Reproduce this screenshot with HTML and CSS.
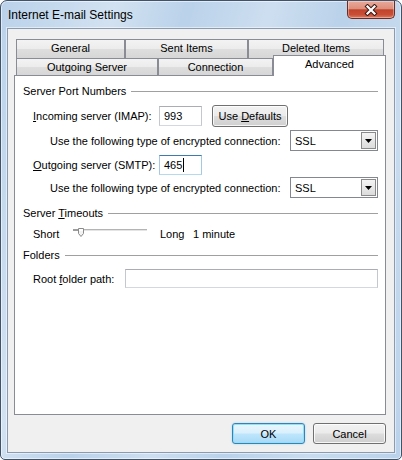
FILE: index.html
```html
<!DOCTYPE html>
<html>
<head>
<meta charset="utf-8">
<link rel="stylesheet" href="styles.css">
</head>
<body>
<div class="window">
  <div class="titlebar">
    <span class="title">Internet E-mail Settings</span>
    <div class="close">
      <svg width="14" height="12" viewBox="0 0 14 12"><path d="M3.5 2.5 L10.5 9.5 M10.5 2.5 L3.5 9.5" stroke="#3a1a15" stroke-width="4.2" stroke-linecap="square"/><path d="M3.5 2.5 L10.5 9.5 M10.5 2.5 L3.5 9.5" stroke="#fff" stroke-width="2.2" stroke-linecap="square"/></svg>
    </div>
  </div>
  <div class="client">
    <div class="tabs">
      <div class="tabrow back">
        <div class="tab t-general">General</div>
        <div class="tab t-sent">Sent Items</div>
        <div class="tab t-deleted">Deleted Items</div>
      </div>
      <div class="tabrow front">
        <div class="tab t-outgoing">Outgoing Server</div>
        <div class="tab t-connection">Connection</div>
        <div class="tab t-advanced selected">Advanced</div>
      </div>
    </div>
    <div class="panel">
      <div class="hdr"><span>Server Port Numbers</span><span class="line"></span></div>
      <div class="row r1">
        <span class="lbl-port"><u>I</u>ncoming server (IMAP):</span>
        <div class="input port">993</div>
        <div class="btn defaults"><span>Use <u>D</u>efaults</span></div>
      </div>
      <div class="row enc r2">
        <span>Use the following type of encrypted connection:</span>
        <div class="select"><span>SSL</span><span class="arrow"><svg width="7" height="4" viewBox="0 0 7 4"><polygon points="0,0 7,0 3.5,4" fill="#000"/></svg></span></div>
      </div>
      <div class="row r3">
        <span class="lbl-port"><u>O</u>utgoing server (SMTP):</span>
        <div class="input port focus">465<span class="caret"></span></div>
      </div>
      <div class="row enc r4">
        <span>Use the following type of encrypted connection:</span>
        <div class="select"><span>SSL</span><span class="arrow"><svg width="7" height="4" viewBox="0 0 7 4"><polygon points="0,0 7,0 3.5,4" fill="#000"/></svg></span></div>
      </div>
      <div class="hdr h2"><span>Server <u>T</u>imeouts</span><span class="line"></span></div>
      <div class="row r5">
        <span class="lbl-short">Short</span>
        <svg class="slider" width="74" height="13" viewBox="0 0 74 13">
          <rect x="0" y="2" width="74" height="1" fill="#b4b4b4"/>
          <rect x="0" y="3" width="74" height="1" fill="#e4e4e4"/>
          <rect x="0" y="2" width="5" height="2" fill="#9c9c9c"/>
          <path d="M5.5 1.5 H10.5 V6.5 L8 9.5 L5.5 6.5 Z" fill="#f2f2f2" stroke="#8a8a8a"/>
          <rect x="6" y="2" width="4" height="2" fill="#fff"/>
        </svg>
        <span class="lbl-long">Long</span>
        <span>1 minute</span>
      </div>
      <div class="hdr h3"><span>Folders</span><span class="line"></span></div>
      <div class="row r6">
        <span class="lbl-root">Root <u>f</u>older path:</span>
        <div class="input root"></div>
      </div>
    </div>
    <div class="buttons">
      <div class="btn dlg ok">OK</div>
      <div class="btn dlg">Cancel</div>
    </div>
  </div>
</div>
</body>
</html>
```
FILE: styles.css
```css
* { box-sizing: border-box; }
html, body { margin: 0; padding: 0; }
body {
  width: 402px;
  height: 460px;
  overflow: hidden;
  background: #fff;
  font-family: "Liberation Sans", Arial, sans-serif;
  font-size: 11px;
  color: #000;
}
.window {
  width: 402px;
  height: 460px;
  border: 1px solid #40536b;
  border-radius: 7px 7px 5px 5px;
  padding: 0 6px 6px 6px;
  display: flex;
  flex-direction: column;
  background:
    linear-gradient(105deg, rgba(255,255,255,0) 0%, rgba(255,255,255,.35) 22%, rgba(255,255,255,0) 36%, rgba(255,255,255,.28) 52%, rgba(255,255,255,0) 66%, rgba(255,255,255,.22) 82%, rgba(255,255,255,0) 100%),
    #bad2ea;
  box-shadow: inset 0 0 0 1px rgba(255,255,255,.55);
}
.titlebar {
  height: 27px;
  display: flex;
  align-items: flex-start;
}
.title {
  margin-top: 7px;
  padding-left: 1px;
  font-size: 12px;
  line-height: 15px;
}
.close {
  margin-left: auto;
  width: 48px;
  height: 18px;
  border: 1px solid #6a2c24;
  border-top: none;
  border-radius: 0 0 5px 5px;
  background: linear-gradient(#eaa99a 0%, #dc8f7c 45%, #c3432b 52%, #c84f36 80%, #dd7a5f 100%);
  box-shadow: inset 0 0 0 1px rgba(255,255,255,.35);
  display: flex;
  align-items: center;
  justify-content: center;
}
.client {
  height: 425px;
  background: #f0f0f0;
  border: 1px solid #8a9ab0;
  box-shadow: 0 0 0 1px rgba(255,255,255,.5);
  padding: 10px 8px 8px 6px;
  display: flex;
  flex-direction: column;
}
.tabs {
  margin-left: 2px;
  display: flex;
  flex-direction: column;
}
.tabrow {
  display: flex;
  align-items: flex-end;
}
.tabrow.back { height: 19px; }
.tabrow.front { height: 17px; }
.tab {
  border: 1px solid #898c95;
  border-bottom: none;
  background: linear-gradient(#f3f3f3 0%, #ececec 48%, #dedede 52%, #d6d6d6 100%);
  text-align: center;
}
.back .tab { height: 19px; line-height: 17px; }
.front .tab { height: 17px; line-height: 16px; }
.t-general { width: 109px; }
.t-sent { width: 123px; }
.t-deleted { width: 136px; }
.t-outgoing { width: 142px; }
.t-connection { width: 115px; }
.front .tab.selected {
  width: 113px;
  height: 21px;
  margin-bottom: -1px;
  background: #fff;
  position: relative;
  z-index: 2;
  line-height: 16px;
}
.panel {
  width: 372px;
  height: 340px;
  border: 1px solid #898c95;
  background: #fff;
  padding: 9px 7px 0 8px;
  display: flex;
  flex-direction: column;
}
.hdr {
  height: 13px;
  line-height: 13px;
  display: flex;
  align-items: center;
  gap: 5px;
}
.hdr .line {
  flex: 1;
  height: 1px;
  background: #a0a0a0;
}
.h2, .h3 { margin-top: 9px; }
.row {
  display: flex;
  align-items: center;
  padding-left: 10px;
}
.r1 { height: 22px; margin-top: 7px; }
.r2 { height: 21px; margin-top: 3px; }
.r3 { height: 20px; margin-top: 4px; }
.r4 { height: 21px; margin-top: 2px; }
.r5 { height: 13px; margin-top: 7px; }
.r6 { height: 19px; margin-top: 7px; }
.row.enc { padding-left: 27px; }
.lbl-port { width: 126px; }
.lbl-short { width: 40px; }
.lbl-long { width: 33px; margin-left: 13px; }
.lbl-root { width: 92px; }
.input {
  height: 20px;
  border: 1px solid #abadb3;
  border-left-color: #c4c7ce;
  border-right-color: #c4c7ce;
  border-bottom-color: #d3d7de;
  background: #fff;
  padding-left: 4px;
  line-height: 18px;
  display: flex;
  align-items: center;
}
.input.port { width: 43px; }
.input.focus {
  border-color: #3d7bad #a4c9e3 #b7d9ed #a4c9e3;
}
.input.root { flex: 1; height: 19px; }
.caret {
  display: inline-block;
  width: 1px;
  height: 14px;
  background: #000;
  margin-left: 1px;
}
.btn {
  height: 22px;
  border: 1px solid #707070;
  border-radius: 3px;
  background: linear-gradient(#f2f2f2 0%, #ebebeb 48%, #dddddd 52%, #cfcfcf 100%);
  box-shadow: inset 0 0 0 1px rgba(255,255,255,.8);
  display: flex;
  align-items: center;
  justify-content: center;
}
.btn.defaults { width: 76px; margin-left: 10px; }
.select {
  margin-left: auto;
  width: 88px;
  height: 21px;
  border: 1px solid #828790;
  background: #fff;
  display: flex;
  align-items: center;
  justify-content: space-between;
  padding: 1px 1px 1px 4px;
}
.arrow {
  width: 15px;
  height: 17px;
  border: 1px solid #8a8a8a;
  background: linear-gradient(#f4f4f4, #dcdcdc);
  display: flex;
  align-items: center;
  justify-content: center;
}
.arrow svg { display: block; }
.slider { display: block; }
.buttons {
  margin-top: 8px;
  display: flex;
  justify-content: flex-end;
  gap: 8px;
}
.btn.dlg { width: 73px; height: 21px; }
.btn.ok {
  border-color: #3c7fb1;
  background: linear-gradient(#eaf6fd 0%, #d9f0fc 48%, #bee6fd 52%, #a7d9f5 100%);
  box-shadow: inset 0 0 0 1px #8fe0fb, 0 0 2px #8fd7f6;
}
```
